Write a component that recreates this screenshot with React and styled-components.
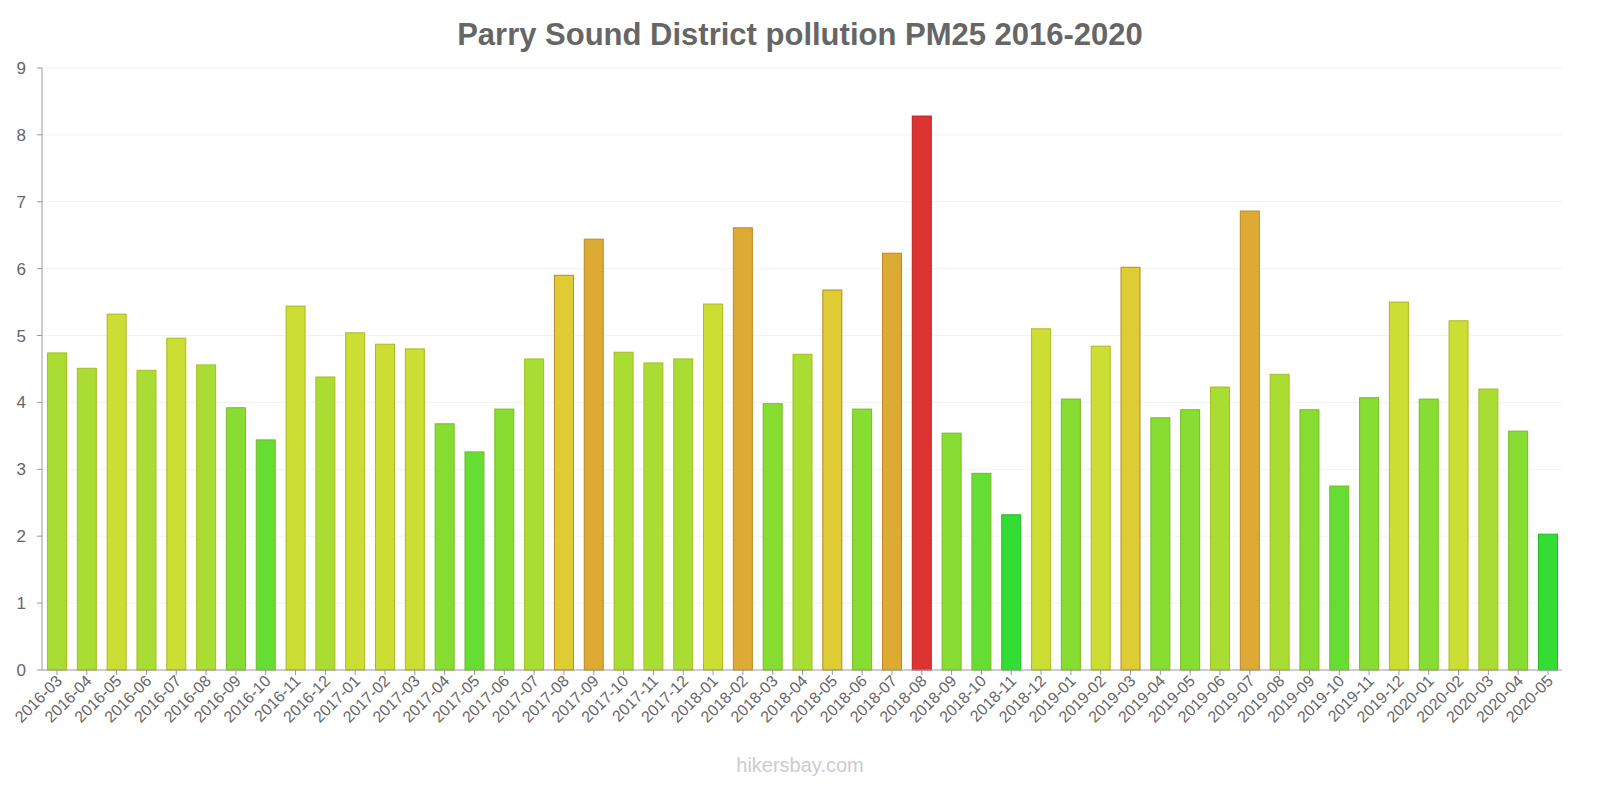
import React from "react";
import styled, { createGlobalStyle } from "styled-components";

const Global = createGlobalStyle`
  body { margin: 0; background: #fff; font-family: "Liberation Sans", Arial, sans-serif; }
`;
const Page = styled.div`
  width: 1600px; height: 800px; display: flex; flex-direction: column; overflow: hidden;
`;
const Title = styled.h1`
  margin: 0; height: 56px; padding-top: 2px; line-height: 66px; text-align: center;
  font-size: 31px; font-weight: bold; color: #666;
`;
const Footer = styled.div`
  height: 50px; line-height: 30px; text-align: center; font-size: 20px; color: #ccc;
`;

const vals = [4.74,4.51,5.32,4.48,4.96,4.56,3.92,3.44,5.44,4.38,5.04,4.87,4.8,3.68,3.26,3.9,4.65,5.9,6.44,4.75,4.59,4.65,5.47,6.61,3.98,4.72,5.68,3.9,6.23,8.28,3.54,2.94,2.32,5.1,4.05,4.84,6.02,3.77,3.89,4.23,6.86,4.42,3.89,2.75,4.07,5.5,4.05,5.22,4.2,3.57,2.03];
const labels = [];
{ let y = 2016, m = 3; for (let i = 0; i < vals.length; i++) { labels.push(`${y}-${String(m).padStart(2,"0")}`); m++; if (m > 12) { m = 1; y++; } } }
const col = v => v < 2.5 ? "#33dd33" : v < 3.5 ? "#66dd33" : v < 4.2 ? "#88dd33" : v < 4.8 ? "#aadd33" : v < 5.6 ? "#ccdd33" : v < 6.2 ? "#ddcc33" : v < 7.5 ? "#ddaa33" : "#dd3333";
const stroke = v => v < 2.5 ? "#22bb22" : v < 4.2 ? "#77bb22" : v < 5.6 ? "#aabb22" : v < 7.5 ? "#bb8822" : "#bb2222";
const Y0 = 670, U = 66.9, X0 = 57, DX = 29.82, BW = 20;

export default function App() {
  return (
    <Page>
      <Global />
      <Title>Parry Sound District pollution PM25 2016-2020</Title>
      <svg width="1600" height="692" viewBox="0 58 1600 692" style={{ display: "block" }}>
        {[1,2,3,4,5,6,7,8,9].map(i => (
          <line key={i} x1="42" x2="1562" y1={Y0 - i * U} y2={Y0 - i * U} stroke="#f2f2f2" />
        ))}
        {[0,1,2,3,4,5,6,7,8,9].map(i => (
          <g key={i}>
            <line x1="37" x2="42" y1={Y0 - i * U} y2={Y0 - i * U} stroke="#999" />
            <text x="26" y={Y0 - i * U + 6} textAnchor="end" fontSize="17" fill="#666">{i}</text>
          </g>
        ))}
        {vals.map((v, i) => {
          const cx = X0 + i * DX, h = v * U;
          return (
            <g key={i}>
              <rect x={cx - BW / 2 + 0.5} y={Y0 - h} width={BW - 1} height={h} fill={col(v)} stroke={stroke(v)} strokeWidth="1" />
              <line x1={cx} x2={cx} y1={Y0} y2={Y0 + 5} stroke="#999" />
              <text x={cx + 6} y={Y0 + 12} textAnchor="end" fontSize="16" fill="#666" transform={`rotate(-45 ${cx + 6} ${Y0 + 12})`}>{labels[i]}</text>
            </g>
          );
        })}
        <line x1="42" x2="42" y1="68" y2={Y0} stroke="#999" />
        <line x1="42" x2="1562" y1={Y0} y2={Y0} stroke="#999" />
      </svg>
      <Footer>hikersbay.com</Footer>
    </Page>
  );
}
